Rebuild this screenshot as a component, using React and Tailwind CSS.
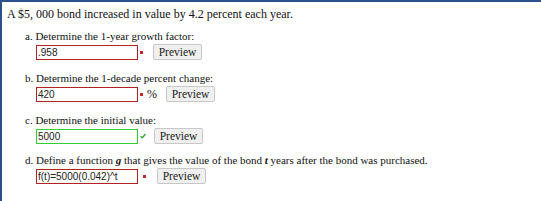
import React from 'react';

const serif = { fontFamily: '"Liberation Serif", "Times New Roman", serif' };

const PreviewButton = () => (
  <button
    className="h-4 w-[49px] bg-[#f0f0f0] border border-[#c8c8c8] rounded-[2px] text-[11.5px] leading-[14px] text-[#222]"
    style={serif}
  >
    Preview
  </button>
);

const AnswerBox = ({ value, status }) => (
  <input
    readOnly
    value={value}
    className={`w-[102px] h-[15px] px-[1px] text-[10px] leading-[13px] text-[#222] bg-white border outline-none ${
      status === 'ok' ? 'border-[#33cc33]' : 'border-[#b22222]'
    }`}
    style={{ fontFamily: '"Liberation Sans", Arial, sans-serif' }}
  />
);

const Part = ({ label, value, status = 'bad', unit, top = 'mt-[11px]', markGap = 'ml-[2px]', btnGap = 'ml-[10px]' }) => (
  <div className={top}>
    <div className="pl-[18px] h-[15px] leading-[15px] text-[11px]">{label}</div>
    <div className="pl-[29px] flex items-center h-[16px]">
      <AnswerBox value={value} status={status} />
      {status === 'ok' ? (
        <svg className={`${markGap} w-[6px] h-[6px]`} viewBox="0 0 6 6">
          <path d="M0.5 3.2 L2.3 4.8 L5.5 1" fill="none" stroke="#33aa33" strokeWidth="1.4" />
        </svg>
      ) : (
        <span className={`${markGap} w-[3px] h-[3px] bg-[#c0282d]`} />
      )}
      {unit && <span className="ml-[4px] text-[12px] leading-[15px]">{unit}</span>}
      <div className={btnGap}>
        <PreviewButton />
      </div>
    </div>
  </div>
);

export default function App() {
  return (
    <div
      className="w-[541px] h-[201px] bg-white border-t-2 border-l-2 border-[#2d4f8e] text-[12px] text-[#111] overflow-hidden"
      style={serif}
    >
      <div className="pt-[5px] pl-[5px]">
        <div className="h-[15px] leading-[15px]">A $5, 000 bond increased in value by 4.2 percent each year.</div>
        <Part label="a. Determine the 1-year growth factor:" value=".958" top="mt-[7px]" btnGap="ml-[10px]" />
        <Part label="b. Determine the 1-decade percent change:" value="420" unit="%" btnGap="ml-[9px]" />
        <Part label="c. Determine the initial value:" value="5000" status="ok" btnGap="ml-[8px]" />
        <Part
          label={
            <>
              d. Define a function <i className="font-bold">g</i> that gives the value of the bond{' '}
              <i className="font-bold">t</i> years after the bond was purchased.
            </>
          }
          value="f(t)=5000(0.042)^t"
          top="mt-[9px]"
          markGap="ml-[5px]"
          btnGap="ml-[11px]"
        />
      </div>
    </div>
  );
}
